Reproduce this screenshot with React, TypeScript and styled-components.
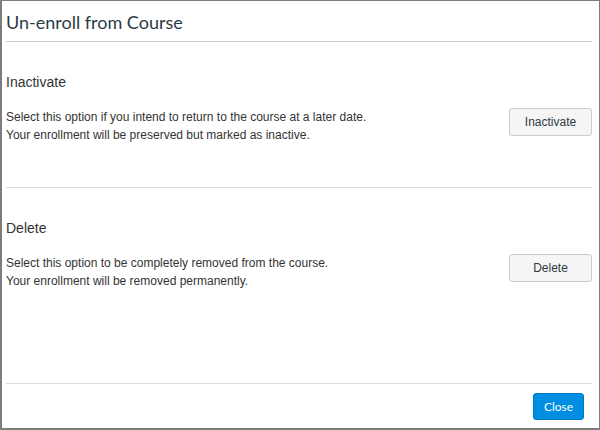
import React from "react"
import styled, { createGlobalStyle } from "styled-components"

const Global = createGlobalStyle`
    html, body {
        margin: 0;
        padding: 0;
        background: #ffffff;
    }
`

const Dialog = styled.div`
    width: 600px;
    height: 430px;
    box-sizing: border-box;
    border: 1px solid #7d7d7d;
    border-left-width: 2px;
    border-bottom-width: 2px;
    display: flex;
    flex-flow: column;
    padding: 0 7px 0 4px;
    font-family: "Liberation Sans", Arial, sans-serif;
    color: #2d3b45;
`

const Header = styled.header`
    height: 40px;
    border-bottom: 1px solid #c7cdd1;
    display: flex;
    align-items: center;
`

const Title = styled.h1`
    margin: 0;
    padding-top: 1px;
    font-family: Lato, "Liberation Sans", sans-serif;
    font-size: 18px;
    font-weight: 400;
    color: #2d3b45;
`

const Body = styled.main`
    flex: 1;
    display: flex;
    flex-flow: column;
`

const Section = styled.section<{ $divided?: boolean }>`
    padding: 30px 0 43px;
    border-bottom: ${p => (p.$divided ? "1px solid #d9dcde" : "none")};
`

const Heading = styled.h2`
    margin: 0 0 17px;
    font-size: 14px;
    font-weight: 400;
    line-height: 20px;
    color: #333333;
`

const Row = styled.div`
    display: flex;
    justify-content: space-between;
    align-items: flex-start;
`

const Text = styled.p`
    margin: 0;
    font-size: 12px;
    line-height: 17.5px;
    color: #333333;
`

const Button = styled.button`
    width: 83px;
    height: 28px;
    margin-top: -1px;
    background: #f5f5f5;
    border: 1px solid #c7cdd1;
    border-radius: 3px;
    font-family: "Liberation Sans", Arial, sans-serif;
    font-size: 12px;
    color: #2d3b45;
    padding: 0;
`

const Footer = styled.footer`
    border-top: 1px solid #d9dcde;
    height: 44px;
    display: flex;
    justify-content: flex-end;
    align-items: center;
    padding-right: 8px;
`

const Primary = styled.button`
    width: 51px;
    height: 27px;
    background: #008ee2;
    border: 1px solid #0079c1;
    border-radius: 3px;
    font-family: Lato, "Liberation Sans", sans-serif;
    font-size: 12px;
    color: #ffffff;
    padding: 0;
`

const options = [
    {
        title: "Inactivate",
        lines: [
            "Select this option if you intend to return to the course at a later date.",
            "Your enrollment will be preserved but marked as inactive.",
        ],
        action: "Inactivate",
    },
    {
        title: "Delete",
        lines: [
            "Select this option to be completely removed from the course.",
            "Your enrollment will be removed permanently.",
        ],
        action: "Delete",
    },
]

export default function App() {
    return (
        <>
            <Global />
            <Dialog>
                <Header>
                    <Title>Un-enroll from Course</Title>
                </Header>
                <Body>
                    {options.map((o, i) => (
                        <Section key={o.title} $divided={i === 0}>
                            <Heading>{o.title}</Heading>
                            <Row>
                                <Text>
                                    {o.lines[0]}
                                    <br />
                                    {o.lines[1]}
                                </Text>
                                <Button>{o.action}</Button>
                            </Row>
                        </Section>
                    ))}
                </Body>
                <Footer>
                    <Primary>Close</Primary>
                </Footer>
            </Dialog>
        </>
    )
}
